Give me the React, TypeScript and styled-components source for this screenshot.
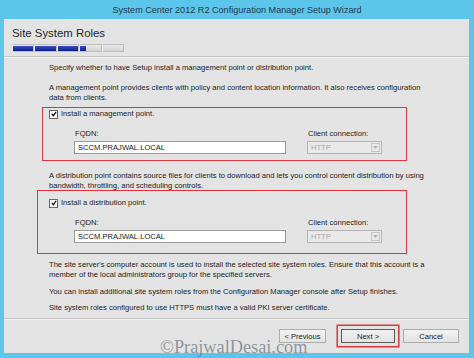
import styled, { createGlobalStyle } from "styled-components";

const GlobalStyle = createGlobalStyle`
  html, body {
    margin: 0;
    padding: 0;
    background: #5cc6ea;
  }
  body {
    font-family: "Liberation Sans", Arial, sans-serif;
  }
`;

const Window = styled.div`
  width: 474px;
  height: 358px;
  display: flex;
  flex-direction: column;
  background: #5cc6ea;
  overflow: hidden;
`;

const TitleBar = styled.div`
  height: 19px;
  display: flex;
  align-items: center;
  justify-content: center;
  font-size: 9.1px;
  color: #22384f;
`;

const Panel = styled.div`
  position: relative;
  margin: 0 5px 5px 4px;
  flex: 1;
  display: flex;
  flex-direction: column;
  background: #e3e3e3;
`;

const Header = styled.div`
  height: 38px;
  padding: 8px 0 0 8px;
  box-sizing: border-box;
  border-bottom: 1px solid #c4c4c4;
  box-shadow: 0 1px 0 #f2f2f2;
`;

const HeaderTitle = styled.div`
  font-size: 11.4px;
  color: #262626;
  line-height: 13px;
`;

const Progress = styled.div`
  margin-top: 4px;
  display: flex;
  width: 112px;
  height: 8px;
`;

const Segment = styled.div`
  flex: 1;
  position: relative;
  background: linear-gradient(#e9e9e9, #d2d2d2);
  border: 1px solid #bdbdbd;
  border-left-color: #f4f4f4;
  box-sizing: border-box;
`;

const SegmentFill = styled.div`
  position: absolute;
  left: 0;
  bottom: 0;
  height: 5px;
  background: linear-gradient(#3a4fc4, #0d1f8a);
`;

const Body = styled.div`
  flex: 1;
  padding: 6px 20px 0 45px;
  font-size: 7.6px;
  line-height: 10px;
  color: #222;
  white-space: nowrap;
`;

const Para = styled.p<{ $top?: number }>`
  margin: ${(p) => p.$top ?? 0}px 0 0;
`;

// red annotation frame drawn over the group, offsets per box
const Group = styled.div<{ $top: number; $l: number; $t: number; $r: number; $b: number }>`
  position: relative;
  margin-top: ${(p) => p.$top}px;

  &::before {
    content: "";
    position: absolute;
    left: ${(p) => p.$l}px;
    top: ${(p) => p.$t}px;
    right: ${(p) => p.$r}px;
    bottom: ${(p) => p.$b}px;
    border: 1.5px solid #e0333b;
    pointer-events: none;
  }
`;

const CheckRow = styled.label`
  display: flex;
  align-items: center;
  gap: 3px;
  height: 10px;
`;

const CheckBox = styled.span`
  width: 7px;
  height: 7px;
  border: 1px solid #6a6a6a;
  background: #fff;
  display: flex;
  align-items: center;
  justify-content: center;
`;

const Fields = styled.div`
  display: flex;
  margin: 10px 0 0 25px;
  gap: 21px;
`;

const Field = styled.div`
  display: flex;
  flex-direction: column;
  gap: 2px;
`;

const FieldLabel = styled.div`
  height: 10px;
  padding-left: 1px;
`;

const TextInput = styled.div`
  width: 212px;
  height: 13px;
  box-sizing: border-box;
  background: #fff;
  border: 1px solid #9d9d9d;
  padding: 0 3px;
  line-height: 11px;
  color: #1a1a1a;
`;

const Select = styled.div`
  width: 75px;
  height: 13px;
  box-sizing: border-box;
  background: #e9e9e9;
  border: 1px solid #b4b4b4;
  display: flex;
  align-items: center;
  justify-content: space-between;
  padding-left: 3px;
  color: #a8a8a8;
`;

const SelectArrow = styled.span`
  width: 9px;
  height: 9px;
  margin-right: 1px;
  box-sizing: border-box;
  border: 1px solid #c4c4c4;
  display: flex;
  align-items: center;
  justify-content: center;
`;

const Footer = styled.div`
  height: 35px;
  box-sizing: border-box;
  border-top: 1px solid #c4c4c4;
  box-shadow: inset 0 1px 0 #f2f2f2;
  display: flex;
  align-items: center;
  justify-content: flex-end;
  padding-right: 10px;
  gap: 8px;
`;

const Button = styled.div<{ $default?: boolean }>`
  width: ${(p) => (p.$default ? 54 : 47)}px;
  height: 14px;
  box-sizing: border-box;
  display: flex;
  align-items: center;
  justify-content: center;
  font-size: 7.6px;
  color: #1c1c1c;
  background: linear-gradient(#f2f2f2, #e3e3e3);
  border: 1px solid ${(p) => (p.$default ? "#5a5a5a" : "#acacac")};
  box-shadow: ${(p) => (p.$default ? "0 0 0 3px #e3e3e3, 0 0 0 4.5px #e0333b" : "none")};
  margin-left: ${(p) => (p.$default ? 7 : 0)}px;
`;

const CancelButton = styled(Button)`
  width: 56px;
`;

const Watermark = styled.div`
  position: absolute;
  left: 156px;
  bottom: -5px;
  font-family: "Liberation Serif", "Times New Roman", serif;
  font-size: 18.3px;
  color: rgba(110, 122, 130, 0.75);
  pointer-events: none;
`;

function Check() {
  return (
    <CheckBox>
      <svg width="6" height="6" viewBox="0 0 7 7">
        <path d="M1 3.5 L2.8 5.5 L6 1" fill="none" stroke="#111" strokeWidth="1.5" />
      </svg>
    </CheckBox>
  );
}

function RoleFields() {
  return (
    <Fields>
      <Field>
        <FieldLabel>FQDN:</FieldLabel>
        <TextInput>SCCM.PRAJWAL.LOCAL</TextInput>
      </Field>
      <Field>
        <FieldLabel>Client connection:</FieldLabel>
        <Select>
          HTTP
          <SelectArrow>
            <svg width="5" height="3" viewBox="0 0 5 3">
              <path d="M0 0 L5 0 L2.5 3 Z" fill="#b0b0b0" />
            </svg>
          </SelectArrow>
        </Select>
      </Field>
    </Fields>
  );
}

export default function App() {
  return (
    <Window>
      <GlobalStyle />
      <TitleBar>System Center 2012 R2 Configuration Manager Setup Wizard</TitleBar>
      <Panel>
        <Header>
          <HeaderTitle>Site System Roles</HeaderTitle>
          <Progress>
            {[100, 100, 100, 27, 0].map((w, i) => (
              <Segment key={i}>{w > 0 && <SegmentFill style={{ width: `${w}%` }} />}</Segment>
            ))}
          </Progress>
        </Header>
        <Body>
          <Para>Specify whether to have Setup install a management point or distribution point.</Para>
          <Para $top={10}>
            A management point provides clients with policy and content location information. It also receives
            configuration
            <br />
            data from clients.
          </Para>
          <Group $top={6} $l={-7} $t={-2} $r={42} $b={-7}>
            <CheckRow>
              <Check />
              Install a management point.
            </CheckRow>
            <RoleFields />
          </Group>
          <Para $top={17}>
            A distribution point contains source files for clients to download and lets you control content
            distribution by using
            <br />
            bandwidth, throttling, and scheduling controls.
          </Para>
          <Group $top={7} $l={-12} $t={-8} $r={42} $b={-11}>
            <CheckRow>
              <Check />
              Install a distribution point.
            </CheckRow>
            <RoleFields />
          </Group>
          <Para $top={17}>
            The site server&apos;s computer account is used to install the selected site system roles. Ensure that
            this account is a
            <br />
            member of the local administrators group for the specified servers.
          </Para>
          <Para $top={7}>
            You can install additional site system roles from the Configuration Manager console after Setup finishes.
          </Para>
          <Para $top={6}>Site system roles configured to use HTTPS must have a valid PKI server certificate.</Para>
        </Body>
        <Footer>
          <Button>&lt; Previous</Button>
          <Button $default>Next &gt;</Button>
          <CancelButton>Cancel</CancelButton>
        </Footer>
        <Watermark>©PrajwalDesai.com</Watermark>
      </Panel>
    </Window>
  );
}
